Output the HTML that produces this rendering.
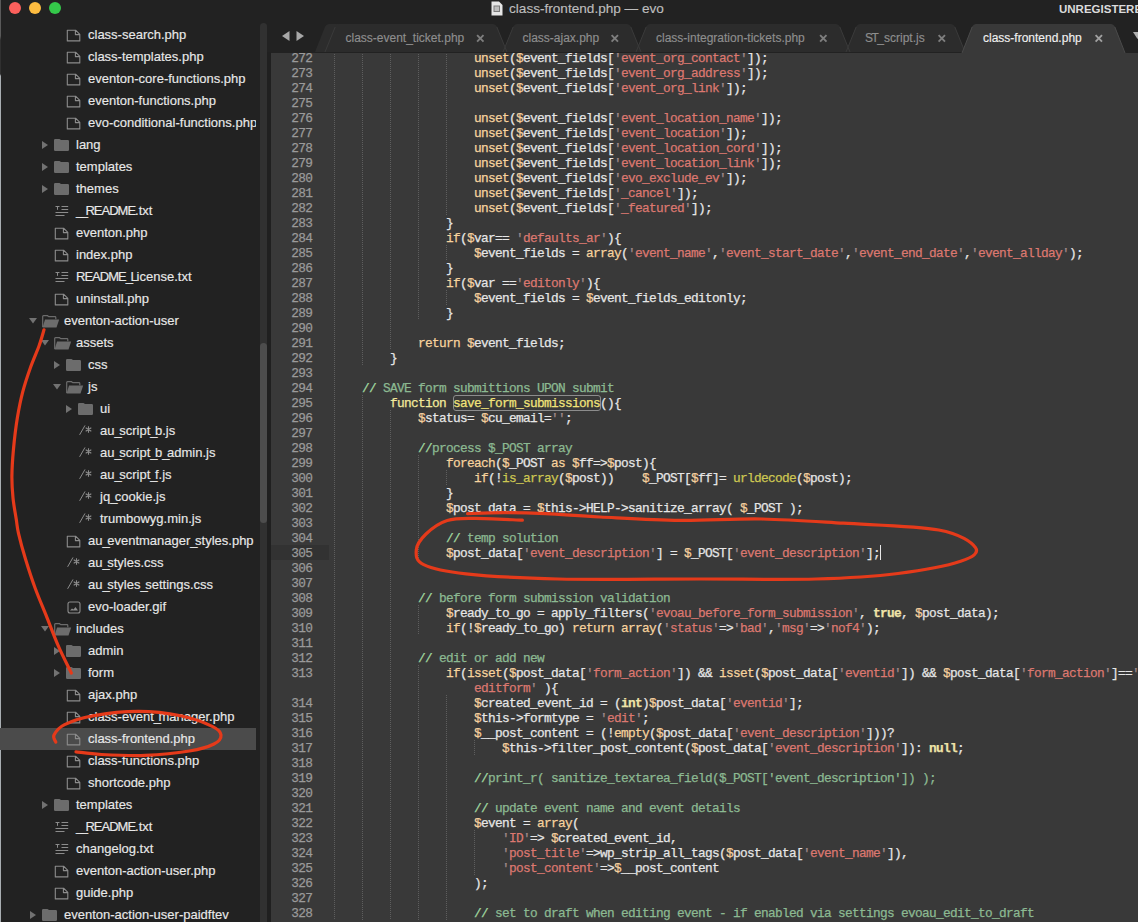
<!DOCTYPE html>
<html><head><meta charset="utf-8"><title>class-frontend.php — evo</title><style>
*{margin:0;padding:0;box-sizing:border-box}
html,body{width:1138px;height:922px;overflow:hidden;background:#222222}
body{position:relative;font-family:"Liberation Sans",sans-serif}
.abs{position:absolute}
#edge{position:absolute;left:0;top:0;width:1px;height:922px;background:linear-gradient(#5a5a5a 0,#5a5a5a 36px,#303030 40px,#303030 74px,#a9aeb2 76px,#a9aeb2 100%)}
.tl{position:absolute;top:2px;width:12px;height:12px;border-radius:50%}
#title{position:absolute;left:509px;top:1px;font-size:13.6px;color:#bdbdbd;line-height:16px;white-space:nowrap}
#unreg{position:absolute;left:1059px;top:2px;font-size:11.5px;font-weight:bold;color:#dcdcdc;line-height:14px;white-space:nowrap}
#tabs{position:absolute;left:0;top:0}
.tt{position:absolute;top:31px;font-size:12px;color:#8e8e8e;line-height:14px;white-space:nowrap}
.tt.act{color:#f0f0f0}
#side{position:absolute;left:0;top:23px;width:256px;height:899px;overflow:hidden}
#sideinner{position:absolute;left:0;top:-23px;width:258px;height:922px}
.sel{position:absolute;left:0;width:256px;height:22px;background:#4b4b4b}
.sbt{position:absolute;font-size:13px;line-height:22px;color:#e8e8e8;white-space:nowrap;padding-top:1px}
.ic{position:absolute}
.sbt b,.tt b{font-weight:normal}.tt b.uc{letter-spacing:-1.5px}.sbt b.us{letter-spacing:-2.5px}.sbt b.uc{letter-spacing:-1px}
.jsic{position:absolute;font-family:"Liberation Sans",sans-serif;font-size:12px;color:#8c8c8c;line-height:14px;letter-spacing:1px}
#track{position:absolute;left:260px;top:23px;width:7px;height:899px;background:#313131;border-radius:3.5px 3.5px 0 0}
#thumb{position:absolute;left:260px;top:343px;width:7px;height:180px;background:#4d4d4d;border-radius:3.5px}
#strip{position:absolute;left:267px;top:52px;width:4px;height:870px;background:#202020}
#ed{position:absolute;left:271px;top:53px;width:867px;height:869px;background:#393939;overflow:hidden}
.ln{position:absolute;left:0;width:41.3px;text-align:right;height:15px;line-height:15px;font-family:"Liberation Mono",monospace;font-size:12.8px;letter-spacing:-0.68px;color:#9a9a9a;padding-top:1px}
.ln.cur{background:transparent}
#curg{position:absolute;left:0;top:492px;width:58px;height:15px;background:#323232}
.cl{position:absolute;height:15px;line-height:15px;white-space:pre;font-family:"Liberation Mono",monospace;font-size:12.8px;letter-spacing:-0.68px;color:#e6e6e6;padding-top:1px}
.cl i{font-style:normal}
.cl,.ln{-webkit-text-stroke:0.25px currentColor}
.sbt,.tt,#title{-webkit-text-stroke:0.15px currentColor}
.gd{position:absolute;width:1px;background:repeating-linear-gradient(#5e5e5e 0,#5e5e5e 1px,transparent 1px,transparent 2px)}
i.k{color:#f7d39e} i.d{color:#f6d09e} i.v{color:#e6e6e6} i.o{color:#e6e6e6} i.s{color:#dc7870} i.q{color:#a08a8a}
i.c{color:#8cb992} i.cs{color:#a2d9a0} i.f{color:#f3ea9c} i.fn{color:#f2e47a} i.b{color:#cdc752} i.t{color:#eee3a8;font-weight:bold}

#boxr{position:absolute;left:182px;top:342px;width:148px;height:16px;border:1px solid #8c8c8c;border-radius:3px}
#cursor{position:absolute;left:609px;top:492px;width:1px;height:15px;background:#e8e8e8}
#ann{position:absolute;left:0;top:0}
</style></head>
<body>
<div id="edge"></div>
<div class="tl" style="left:9px;background:#fc605c"></div>
<div class="tl" style="left:29px;background:#fdbc40"></div>
<div class="tl" style="left:49px;background:#34c84a"></div>
<svg class="abs" style="left:491px;top:1px" width="12" height="15" viewBox="0 0 12 15"><path d="M0.5 0.5 H8 L11.5 4 V14.5 H0.5 Z" fill="#e6e6e6"/><rect x="2.5" y="4.5" width="6.5" height="6.5" fill="#7a7a7a"/><rect x="3.5" y="5.5" width="4.5" height="4.5" fill="#bdbdbd"/></svg>
<div id="title">class-frontend.php — evo</div>
<div id="unreg">UNREGISTERED</div>
<svg id="tabs" width="1138" height="53" viewBox="0 0 1138 53"><path d="M 315 52 L 325 26.8 Q 326.6 24 328.8 24 L 397.2 24 Q 399.4 24 401 26.8 L 420 52 Z" fill="#2c2c2c"/><path d="M 325 52 L 335 26.8 Q 336.6 24 338.8 24 L 493.2 24 Q 495.4 24 497 26.8 L 507 52 Z" fill="#2c2c2c"/><path d="M 503 52 L 513 26.8 Q 514.6 24 516.8 24 L 627.2 24 Q 629.4 24 631 26.8 L 641 52 Z" fill="#2c2c2c"/><path d="M 636 52 L 646 26.8 Q 647.6 24 649.8 24 L 836.2 24 Q 838.4 24 840 26.8 L 850 52 Z" fill="#2c2c2c"/><path d="M 846 52 L 856 26.8 Q 857.6 24 859.8 24 L 951.2 24 Q 953.4 24 955 26.8 L 965 52 Z" fill="#2c2c2c"/><path d="M 325 52 L 335.2 27 M 496.8 27 L 507 52" stroke="#3a3a3a" stroke-width="1" fill="none"/><path d="M 503 52 L 513.2 27 M 630.8 27 L 641 52" stroke="#3a3a3a" stroke-width="1" fill="none"/><path d="M 636 52 L 646.2 27 M 839.8 27 L 850 52" stroke="#3a3a3a" stroke-width="1" fill="none"/><path d="M 846 52 L 856.2 27 M 954.8 27 L 965 52" stroke="#3a3a3a" stroke-width="1" fill="none"/><path d="M 962 53 L 972 26.8 Q 973.6 24 975.8 24 L 1111.2 24 Q 1113.4 24 1115 26.8 L 1125 53 Z" fill="#393939"/><path d="M 962 53 L 972.2 27 M 1114.8 27 L 1125 53" stroke="#4a4a4a" stroke-width="1" fill="none"/><path d="M 282 36 L 289.5 31 L 289.5 41 Z" fill="#a8a8a8"/><path d="M 304 36 L 296.5 31 L 296.5 41 Z" fill="#a8a8a8"/><path d="M 1133 32 L 1142 32 L 1137.5 39 Z" fill="#b0b0b0"/><path d="M 477.1 35.2 L 483.5 41.6 M 483.5 35.2 L 477.1 41.6" stroke="#7e7e7e" stroke-width="1.9"/><path d="M 611.6 35.2 L 618 41.6 M 618 35.2 L 611.6 41.6" stroke="#7e7e7e" stroke-width="1.9"/><path d="M 820.1 35.2 L 826.5 41.6 M 826.5 35.2 L 820.1 41.6" stroke="#7e7e7e" stroke-width="1.9"/><path d="M 938.6 35.2 L 945 41.6 M 945 35.2 L 938.6 41.6" stroke="#7e7e7e" stroke-width="1.9"/><path d="M 1095.6 35.2 L 1102 41.6 M 1102 35.2 L 1095.6 41.6" stroke="#a0a0a0" stroke-width="1.9"/></svg>
<div class="tt" style="left:345.5px">class-event_ticket.php</div><div class="tt" style="left:522.5px">class-ajax.php</div><div class="tt" style="left:656px">class-integration-tickets.php</div><div class="tt" style="left:865px"><b class="uc">S</b><b class="uc">T</b>_script.js</div><div class="tt act" style="left:983px">class-frontend.php</div>
<div id="side"><div id="sideinner"><svg class="ic" style="left:66px;top:28.5px" width="15" height="13" viewBox="0 0 15 13"><path d="M1.3 1.2 H9.6 L13.8 5.4 V11.9 H1.3 Z M9.4 1.2 V5.6 H13.8" fill="none" stroke="#8c8c8c" stroke-width="1.1" stroke-linejoin="round"/></svg><div class="sbt" style="left:88px;top:23px">class-search.php</div><svg class="ic" style="left:66px;top:50.5px" width="15" height="13" viewBox="0 0 15 13"><path d="M1.3 1.2 H9.6 L13.8 5.4 V11.9 H1.3 Z M9.4 1.2 V5.6 H13.8" fill="none" stroke="#8c8c8c" stroke-width="1.1" stroke-linejoin="round"/></svg><div class="sbt" style="left:88px;top:45px">class-templates.php</div><svg class="ic" style="left:66px;top:72.5px" width="15" height="13" viewBox="0 0 15 13"><path d="M1.3 1.2 H9.6 L13.8 5.4 V11.9 H1.3 Z M9.4 1.2 V5.6 H13.8" fill="none" stroke="#8c8c8c" stroke-width="1.1" stroke-linejoin="round"/></svg><div class="sbt" style="left:88px;top:67px">eventon-core-functions.php</div><svg class="ic" style="left:66px;top:94.5px" width="15" height="13" viewBox="0 0 15 13"><path d="M1.3 1.2 H9.6 L13.8 5.4 V11.9 H1.3 Z M9.4 1.2 V5.6 H13.8" fill="none" stroke="#8c8c8c" stroke-width="1.1" stroke-linejoin="round"/></svg><div class="sbt" style="left:88px;top:89px">eventon-functions.php</div><svg class="ic" style="left:66px;top:116.5px" width="15" height="13" viewBox="0 0 15 13"><path d="M1.3 1.2 H9.6 L13.8 5.4 V11.9 H1.3 Z M9.4 1.2 V5.6 H13.8" fill="none" stroke="#8c8c8c" stroke-width="1.1" stroke-linejoin="round"/></svg><div class="sbt" style="left:88px;top:111px">evo-conditional-functions.php</div><svg class="ic" style="left:42px;top:133px" width="8" height="22" viewBox="0 0 8 22"><path d="M0 8 L6 12 L0 16 Z" fill="#727272"/></svg><svg class="ic" style="left:54px;top:138px" width="16" height="13" viewBox="0 0 16 13"><path d="M1.2 1 H5.5 L7 2 H13.8 Q15 2 15 3.2 V11.8 Q15 13 13.8 13 H1.2 Q0 13 0 11.8 V2.2 Q0 1 1.2 1 Z" fill="#6c6c6c"/></svg><div class="sbt" style="left:76px;top:133px">lang</div><svg class="ic" style="left:42px;top:155px" width="8" height="22" viewBox="0 0 8 22"><path d="M0 8 L6 12 L0 16 Z" fill="#727272"/></svg><svg class="ic" style="left:54px;top:160px" width="16" height="13" viewBox="0 0 16 13"><path d="M1.2 1 H5.5 L7 2 H13.8 Q15 2 15 3.2 V11.8 Q15 13 13.8 13 H1.2 Q0 13 0 11.8 V2.2 Q0 1 1.2 1 Z" fill="#6c6c6c"/></svg><div class="sbt" style="left:76px;top:155px">templates</div><svg class="ic" style="left:42px;top:177px" width="8" height="22" viewBox="0 0 8 22"><path d="M0 8 L6 12 L0 16 Z" fill="#727272"/></svg><svg class="ic" style="left:54px;top:182px" width="16" height="13" viewBox="0 0 16 13"><path d="M1.2 1 H5.5 L7 2 H13.8 Q15 2 15 3.2 V11.8 Q15 13 13.8 13 H1.2 Q0 13 0 11.8 V2.2 Q0 1 1.2 1 Z" fill="#6c6c6c"/></svg><div class="sbt" style="left:76px;top:177px">themes</div><svg class="ic" style="left:55px;top:205px" width="14" height="13" viewBox="0 0 14 13"><path d="M0.5 1.5 H4.5 M2.5 1.5 V4.8 M6.5 1.5 H13.2 M6.5 4.5 H13.2 M0.5 7.5 H13.2 M0.5 10.5 H9.5" fill="none" stroke="#8c8c8c" stroke-width="1"/></svg><div class="sbt" style="left:76px;top:199px"><b class="us">_</b><b class="us">_</b><b class="uc">R</b><b class="uc">E</b><b class="uc">A</b><b class="uc">D</b><b class="uc">M</b><b class="uc">E</b>.txt</div><svg class="ic" style="left:54px;top:226.5px" width="15" height="13" viewBox="0 0 15 13"><path d="M1.3 1.2 H9.6 L13.8 5.4 V11.9 H1.3 Z M9.4 1.2 V5.6 H13.8" fill="none" stroke="#8c8c8c" stroke-width="1.1" stroke-linejoin="round"/></svg><div class="sbt" style="left:76px;top:221px">eventon.php</div><svg class="ic" style="left:54px;top:248.5px" width="15" height="13" viewBox="0 0 15 13"><path d="M1.3 1.2 H9.6 L13.8 5.4 V11.9 H1.3 Z M9.4 1.2 V5.6 H13.8" fill="none" stroke="#8c8c8c" stroke-width="1.1" stroke-linejoin="round"/></svg><div class="sbt" style="left:76px;top:243px">index.php</div><svg class="ic" style="left:55px;top:271px" width="14" height="13" viewBox="0 0 14 13"><path d="M0.5 1.5 H4.5 M2.5 1.5 V4.8 M6.5 1.5 H13.2 M6.5 4.5 H13.2 M0.5 7.5 H13.2 M0.5 10.5 H9.5" fill="none" stroke="#8c8c8c" stroke-width="1"/></svg><div class="sbt" style="left:76px;top:265px"><b class="uc">R</b><b class="uc">E</b><b class="uc">A</b><b class="uc">D</b><b class="uc">M</b><b class="uc">E</b><b class="us">_</b><b class="uc">L</b>icense.txt</div><svg class="ic" style="left:54px;top:292.5px" width="15" height="13" viewBox="0 0 15 13"><path d="M1.3 1.2 H9.6 L13.8 5.4 V11.9 H1.3 Z M9.4 1.2 V5.6 H13.8" fill="none" stroke="#8c8c8c" stroke-width="1.1" stroke-linejoin="round"/></svg><div class="sbt" style="left:76px;top:287px">uninstall.php</div><svg class="ic" style="left:29px;top:309px" width="9" height="22" viewBox="0 0 9 22"><path d="M0 9 L8 9 L4 14.5 Z" fill="#727272"/></svg><svg class="ic" style="left:42px;top:314.5px" width="18" height="13" viewBox="0 0 18 13"><path d="M0.7 12 V1.5 Q0.7 0.7 1.5 0.7 H5.5 L6.8 1.7 H13 Q13.8 1.7 13.8 2.5 V4.2" fill="none" stroke="#6c6c6c" stroke-width="1.2"/><path d="M3 4.5 H17.2 L14.5 12.5 H0.5 Z" fill="#6c6c6c"/></svg><div class="sbt" style="left:64px;top:309px">eventon-action-user</div><svg class="ic" style="left:41px;top:331px" width="9" height="22" viewBox="0 0 9 22"><path d="M0 9 L8 9 L4 14.5 Z" fill="#727272"/></svg><svg class="ic" style="left:54px;top:336.5px" width="18" height="13" viewBox="0 0 18 13"><path d="M0.7 12 V1.5 Q0.7 0.7 1.5 0.7 H5.5 L6.8 1.7 H13 Q13.8 1.7 13.8 2.5 V4.2" fill="none" stroke="#6c6c6c" stroke-width="1.2"/><path d="M3 4.5 H17.2 L14.5 12.5 H0.5 Z" fill="#6c6c6c"/></svg><div class="sbt" style="left:76px;top:331px">assets</div><svg class="ic" style="left:54px;top:353px" width="8" height="22" viewBox="0 0 8 22"><path d="M0 8 L6 12 L0 16 Z" fill="#727272"/></svg><svg class="ic" style="left:66px;top:358px" width="16" height="13" viewBox="0 0 16 13"><path d="M1.2 1 H5.5 L7 2 H13.8 Q15 2 15 3.2 V11.8 Q15 13 13.8 13 H1.2 Q0 13 0 11.8 V2.2 Q0 1 1.2 1 Z" fill="#6c6c6c"/></svg><div class="sbt" style="left:88px;top:353px">css</div><svg class="ic" style="left:53px;top:375px" width="9" height="22" viewBox="0 0 9 22"><path d="M0 9 L8 9 L4 14.5 Z" fill="#727272"/></svg><svg class="ic" style="left:66px;top:380.5px" width="18" height="13" viewBox="0 0 18 13"><path d="M0.7 12 V1.5 Q0.7 0.7 1.5 0.7 H5.5 L6.8 1.7 H13 Q13.8 1.7 13.8 2.5 V4.2" fill="none" stroke="#6c6c6c" stroke-width="1.2"/><path d="M3 4.5 H17.2 L14.5 12.5 H0.5 Z" fill="#6c6c6c"/></svg><div class="sbt" style="left:88px;top:375px">js</div><svg class="ic" style="left:66px;top:397px" width="8" height="22" viewBox="0 0 8 22"><path d="M0 8 L6 12 L0 16 Z" fill="#727272"/></svg><svg class="ic" style="left:78px;top:402px" width="16" height="13" viewBox="0 0 16 13"><path d="M1.2 1 H5.5 L7 2 H13.8 Q15 2 15 3.2 V11.8 Q15 13 13.8 13 H1.2 Q0 13 0 11.8 V2.2 Q0 1 1.2 1 Z" fill="#6c6c6c"/></svg><div class="sbt" style="left:100px;top:397px">ui</div><svg class="ic" style="left:79px;top:425px" width="13" height="11" viewBox="0 0 13 11"><path d="M0.8 9.5 L5.8 0.8" stroke="#8c8c8c" stroke-width="1" stroke-linecap="round"/><path d="M9.5 1.2 V7.8 M6.7 2.8 L12.3 6.2 M6.7 6.2 L12.3 2.8" stroke="#8c8c8c" stroke-width="1.1"/></svg><div class="sbt" style="left:100px;top:419px">au<b class="us">_</b>script<b class="us">_</b>b.js</div><svg class="ic" style="left:79px;top:447px" width="13" height="11" viewBox="0 0 13 11"><path d="M0.8 9.5 L5.8 0.8" stroke="#8c8c8c" stroke-width="1" stroke-linecap="round"/><path d="M9.5 1.2 V7.8 M6.7 2.8 L12.3 6.2 M6.7 6.2 L12.3 2.8" stroke="#8c8c8c" stroke-width="1.1"/></svg><div class="sbt" style="left:100px;top:441px">au<b class="us">_</b>script<b class="us">_</b>b<b class="us">_</b>admin.js</div><svg class="ic" style="left:79px;top:469px" width="13" height="11" viewBox="0 0 13 11"><path d="M0.8 9.5 L5.8 0.8" stroke="#8c8c8c" stroke-width="1" stroke-linecap="round"/><path d="M9.5 1.2 V7.8 M6.7 2.8 L12.3 6.2 M6.7 6.2 L12.3 2.8" stroke="#8c8c8c" stroke-width="1.1"/></svg><div class="sbt" style="left:100px;top:463px">au<b class="us">_</b>script<b class="us">_</b>f.js</div><svg class="ic" style="left:79px;top:491px" width="13" height="11" viewBox="0 0 13 11"><path d="M0.8 9.5 L5.8 0.8" stroke="#8c8c8c" stroke-width="1" stroke-linecap="round"/><path d="M9.5 1.2 V7.8 M6.7 2.8 L12.3 6.2 M6.7 6.2 L12.3 2.8" stroke="#8c8c8c" stroke-width="1.1"/></svg><div class="sbt" style="left:100px;top:485px">jq<b class="us">_</b>cookie.js</div><svg class="ic" style="left:79px;top:513px" width="13" height="11" viewBox="0 0 13 11"><path d="M0.8 9.5 L5.8 0.8" stroke="#8c8c8c" stroke-width="1" stroke-linecap="round"/><path d="M9.5 1.2 V7.8 M6.7 2.8 L12.3 6.2 M6.7 6.2 L12.3 2.8" stroke="#8c8c8c" stroke-width="1.1"/></svg><div class="sbt" style="left:100px;top:507px">trumbowyg.min.js</div><svg class="ic" style="left:66px;top:534.5px" width="15" height="13" viewBox="0 0 15 13"><path d="M1.3 1.2 H9.6 L13.8 5.4 V11.9 H1.3 Z M9.4 1.2 V5.6 H13.8" fill="none" stroke="#8c8c8c" stroke-width="1.1" stroke-linejoin="round"/></svg><div class="sbt" style="left:88px;top:529px">au<b class="us">_</b>eventmanager<b class="us">_</b>styles.php</div><svg class="ic" style="left:67px;top:557px" width="13" height="11" viewBox="0 0 13 11"><path d="M0.8 9.5 L5.8 0.8" stroke="#8c8c8c" stroke-width="1" stroke-linecap="round"/><path d="M9.5 1.2 V7.8 M6.7 2.8 L12.3 6.2 M6.7 6.2 L12.3 2.8" stroke="#8c8c8c" stroke-width="1.1"/></svg><div class="sbt" style="left:88px;top:551px">au<b class="us">_</b>styles.css</div><svg class="ic" style="left:67px;top:579px" width="13" height="11" viewBox="0 0 13 11"><path d="M0.8 9.5 L5.8 0.8" stroke="#8c8c8c" stroke-width="1" stroke-linecap="round"/><path d="M9.5 1.2 V7.8 M6.7 2.8 L12.3 6.2 M6.7 6.2 L12.3 2.8" stroke="#8c8c8c" stroke-width="1.1"/></svg><div class="sbt" style="left:88px;top:573px">au<b class="us">_</b>styles<b class="us">_</b>settings.css</div><svg class="ic" style="left:67px;top:601px" width="14" height="13" viewBox="0 0 14 13"><rect x="1" y="1" width="12" height="11" rx="2" fill="none" stroke="#8c8c8c" stroke-width="1.1"/><path d="M3 9.5 L5 7.5 L6.5 8.5 L8.5 6 L11 9.5 Z" fill="#8c8c8c"/></svg><div class="sbt" style="left:88px;top:595px">evo-loader.gif</div><svg class="ic" style="left:41px;top:617px" width="9" height="22" viewBox="0 0 9 22"><path d="M0 9 L8 9 L4 14.5 Z" fill="#727272"/></svg><svg class="ic" style="left:54px;top:622.5px" width="18" height="13" viewBox="0 0 18 13"><path d="M0.7 12 V1.5 Q0.7 0.7 1.5 0.7 H5.5 L6.8 1.7 H13 Q13.8 1.7 13.8 2.5 V4.2" fill="none" stroke="#6c6c6c" stroke-width="1.2"/><path d="M3 4.5 H17.2 L14.5 12.5 H0.5 Z" fill="#6c6c6c"/></svg><div class="sbt" style="left:76px;top:617px">includes</div><svg class="ic" style="left:54px;top:639px" width="8" height="22" viewBox="0 0 8 22"><path d="M0 8 L6 12 L0 16 Z" fill="#727272"/></svg><svg class="ic" style="left:66px;top:644px" width="16" height="13" viewBox="0 0 16 13"><path d="M1.2 1 H5.5 L7 2 H13.8 Q15 2 15 3.2 V11.8 Q15 13 13.8 13 H1.2 Q0 13 0 11.8 V2.2 Q0 1 1.2 1 Z" fill="#6c6c6c"/></svg><div class="sbt" style="left:88px;top:639px">admin</div><svg class="ic" style="left:54px;top:661px" width="8" height="22" viewBox="0 0 8 22"><path d="M0 8 L6 12 L0 16 Z" fill="#727272"/></svg><svg class="ic" style="left:66px;top:666px" width="16" height="13" viewBox="0 0 16 13"><path d="M1.2 1 H5.5 L7 2 H13.8 Q15 2 15 3.2 V11.8 Q15 13 13.8 13 H1.2 Q0 13 0 11.8 V2.2 Q0 1 1.2 1 Z" fill="#6c6c6c"/></svg><div class="sbt" style="left:88px;top:661px">form</div><svg class="ic" style="left:66px;top:688.5px" width="15" height="13" viewBox="0 0 15 13"><path d="M1.3 1.2 H9.6 L13.8 5.4 V11.9 H1.3 Z M9.4 1.2 V5.6 H13.8" fill="none" stroke="#8c8c8c" stroke-width="1.1" stroke-linejoin="round"/></svg><div class="sbt" style="left:88px;top:683px">ajax.php</div><svg class="ic" style="left:66px;top:710.5px" width="15" height="13" viewBox="0 0 15 13"><path d="M1.3 1.2 H9.6 L13.8 5.4 V11.9 H1.3 Z M9.4 1.2 V5.6 H13.8" fill="none" stroke="#8c8c8c" stroke-width="1.1" stroke-linejoin="round"/></svg><div class="sbt" style="left:88px;top:705px">class-event<b class="us">_</b>manager.php</div><div class="sel" style="top:728px"></div><svg class="ic" style="left:66px;top:732.5px" width="15" height="13" viewBox="0 0 15 13"><path d="M1.3 1.2 H9.6 L13.8 5.4 V11.9 H1.3 Z M9.4 1.2 V5.6 H13.8" fill="none" stroke="#8c8c8c" stroke-width="1.1" stroke-linejoin="round"/></svg><div class="sbt" style="left:88px;top:727px">class-frontend.php</div><svg class="ic" style="left:66px;top:754.5px" width="15" height="13" viewBox="0 0 15 13"><path d="M1.3 1.2 H9.6 L13.8 5.4 V11.9 H1.3 Z M9.4 1.2 V5.6 H13.8" fill="none" stroke="#8c8c8c" stroke-width="1.1" stroke-linejoin="round"/></svg><div class="sbt" style="left:88px;top:749px">class-functions.php</div><svg class="ic" style="left:66px;top:776.5px" width="15" height="13" viewBox="0 0 15 13"><path d="M1.3 1.2 H9.6 L13.8 5.4 V11.9 H1.3 Z M9.4 1.2 V5.6 H13.8" fill="none" stroke="#8c8c8c" stroke-width="1.1" stroke-linejoin="round"/></svg><div class="sbt" style="left:88px;top:771px">shortcode.php</div><svg class="ic" style="left:42px;top:793px" width="8" height="22" viewBox="0 0 8 22"><path d="M0 8 L6 12 L0 16 Z" fill="#727272"/></svg><svg class="ic" style="left:54px;top:798px" width="16" height="13" viewBox="0 0 16 13"><path d="M1.2 1 H5.5 L7 2 H13.8 Q15 2 15 3.2 V11.8 Q15 13 13.8 13 H1.2 Q0 13 0 11.8 V2.2 Q0 1 1.2 1 Z" fill="#6c6c6c"/></svg><div class="sbt" style="left:76px;top:793px">templates</div><svg class="ic" style="left:55px;top:821px" width="14" height="13" viewBox="0 0 14 13"><path d="M0.5 1.5 H4.5 M2.5 1.5 V4.8 M6.5 1.5 H13.2 M6.5 4.5 H13.2 M0.5 7.5 H13.2 M0.5 10.5 H9.5" fill="none" stroke="#8c8c8c" stroke-width="1"/></svg><div class="sbt" style="left:76px;top:815px"><b class="us">_</b><b class="us">_</b><b class="uc">R</b><b class="uc">E</b><b class="uc">A</b><b class="uc">D</b><b class="uc">M</b><b class="uc">E</b>.txt</div><svg class="ic" style="left:55px;top:843px" width="14" height="13" viewBox="0 0 14 13"><path d="M0.5 1.5 H4.5 M2.5 1.5 V4.8 M6.5 1.5 H13.2 M6.5 4.5 H13.2 M0.5 7.5 H13.2 M0.5 10.5 H9.5" fill="none" stroke="#8c8c8c" stroke-width="1"/></svg><div class="sbt" style="left:76px;top:837px">changelog.txt</div><svg class="ic" style="left:54px;top:864.5px" width="15" height="13" viewBox="0 0 15 13"><path d="M1.3 1.2 H9.6 L13.8 5.4 V11.9 H1.3 Z M9.4 1.2 V5.6 H13.8" fill="none" stroke="#8c8c8c" stroke-width="1.1" stroke-linejoin="round"/></svg><div class="sbt" style="left:76px;top:859px">eventon-action-user.php</div><svg class="ic" style="left:54px;top:886.5px" width="15" height="13" viewBox="0 0 15 13"><path d="M1.3 1.2 H9.6 L13.8 5.4 V11.9 H1.3 Z M9.4 1.2 V5.6 H13.8" fill="none" stroke="#8c8c8c" stroke-width="1.1" stroke-linejoin="round"/></svg><div class="sbt" style="left:76px;top:881px">guide.php</div><svg class="ic" style="left:30px;top:903px" width="8" height="22" viewBox="0 0 8 22"><path d="M0 8 L6 12 L0 16 Z" fill="#727272"/></svg><svg class="ic" style="left:42px;top:908px" width="16" height="13" viewBox="0 0 16 13"><path d="M1.2 1 H5.5 L7 2 H13.8 Q15 2 15 3.2 V11.8 Q15 13 13.8 13 H1.2 Q0 13 0 11.8 V2.2 Q0 1 1.2 1 Z" fill="#6c6c6c"/></svg><div class="sbt" style="left:64px;top:903px">eventon-action-user-paidftev</div></div></div>
<div id="track"></div><div id="thumb"></div>
<div id="strip"></div>
<div id="ed">
<div id="curg"></div>
<div class="gd" style="left:63px;top:-3px;height:870px"></div><div class="gd" style="left:91px;top:-3px;height:315px"></div><div class="gd" style="left:91px;top:342px;height:525px"></div><div class="gd" style="left:119px;top:-3px;height:300px"></div><div class="gd" style="left:119px;top:357px;height:510px"></div><div class="gd" style="left:147px;top:-3px;height:270px"></div><div class="gd" style="left:147px;top:402px;height:105px"></div><div class="gd" style="left:147px;top:552px;height:30px"></div><div class="gd" style="left:147px;top:612px;height:255px"></div><div class="gd" style="left:175px;top:-3px;height:165px"></div><div class="gd" style="left:175px;top:192px;height:15px"></div><div class="gd" style="left:175px;top:237px;height:15px"></div><div class="gd" style="left:175px;top:417px;height:15px"></div><div class="gd" style="left:175px;top:642px;height:225px"></div><div class="gd" style="left:203px;top:687px;height:15px"></div><div class="gd" style="left:203px;top:777px;height:45px"></div>
<div class="ln" style="top:-3px">272</div><div class="ln" style="top:12px">273</div><div class="ln" style="top:27px">274</div><div class="ln" style="top:42px">275</div><div class="ln" style="top:57px">276</div><div class="ln" style="top:72px">277</div><div class="ln" style="top:87px">278</div><div class="ln" style="top:102px">279</div><div class="ln" style="top:117px">280</div><div class="ln" style="top:132px">281</div><div class="ln" style="top:147px">282</div><div class="ln" style="top:162px">283</div><div class="ln" style="top:177px">284</div><div class="ln" style="top:192px">285</div><div class="ln" style="top:207px">286</div><div class="ln" style="top:222px">287</div><div class="ln" style="top:237px">288</div><div class="ln" style="top:252px">289</div><div class="ln" style="top:267px">290</div><div class="ln" style="top:282px">291</div><div class="ln" style="top:297px">292</div><div class="ln" style="top:312px">293</div><div class="ln" style="top:327px">294</div><div class="ln" style="top:342px">295</div><div class="ln" style="top:357px">296</div><div class="ln" style="top:372px">297</div><div class="ln" style="top:387px">298</div><div class="ln" style="top:402px">299</div><div class="ln" style="top:417px">300</div><div class="ln" style="top:432px">301</div><div class="ln" style="top:447px">302</div><div class="ln" style="top:462px">303</div><div class="ln" style="top:477px">304</div><div class="ln cur" style="top:492px">305</div><div class="ln" style="top:507px">306</div><div class="ln" style="top:522px">307</div><div class="ln" style="top:537px">308</div><div class="ln" style="top:552px">309</div><div class="ln" style="top:567px">310</div><div class="ln" style="top:582px">311</div><div class="ln" style="top:597px">312</div><div class="ln" style="top:612px">313</div><div class="ln" style="top:642px">314</div><div class="ln" style="top:657px">315</div><div class="ln" style="top:672px">316</div><div class="ln" style="top:687px">317</div><div class="ln" style="top:702px">318</div><div class="ln" style="top:717px">319</div><div class="ln" style="top:732px">320</div><div class="ln" style="top:747px">321</div><div class="ln" style="top:762px">322</div><div class="ln" style="top:777px">323</div><div class="ln" style="top:792px">324</div><div class="ln" style="top:807px">325</div><div class="ln" style="top:822px">326</div><div class="ln" style="top:837px">327</div><div class="ln" style="top:852px">328</div>
<div id="boxr"></div>
<div class="cl" style="top:-3px;left:203px"><i class="k">unset</i><i class="o">(</i><i class="d">$</i><i class="v">event_fields</i><i class="o">[</i><i class="q">'</i><i class="s">event_org_contact</i><i class="q">'</i><i class="o">]);</i></div><div class="cl" style="top:12px;left:203px"><i class="k">unset</i><i class="o">(</i><i class="d">$</i><i class="v">event_fields</i><i class="o">[</i><i class="q">'</i><i class="s">event_org_address</i><i class="q">'</i><i class="o">]);</i></div><div class="cl" style="top:27px;left:203px"><i class="k">unset</i><i class="o">(</i><i class="d">$</i><i class="v">event_fields</i><i class="o">[</i><i class="q">'</i><i class="s">event_org_link</i><i class="q">'</i><i class="o">]);</i></div><div class="cl" style="top:57px;left:203px"><i class="k">unset</i><i class="o">(</i><i class="d">$</i><i class="v">event_fields</i><i class="o">[</i><i class="q">'</i><i class="s">event_location_name</i><i class="q">'</i><i class="o">]);</i></div><div class="cl" style="top:72px;left:203px"><i class="k">unset</i><i class="o">(</i><i class="d">$</i><i class="v">event_fields</i><i class="o">[</i><i class="q">'</i><i class="s">event_location</i><i class="q">'</i><i class="o">]);</i></div><div class="cl" style="top:87px;left:203px"><i class="k">unset</i><i class="o">(</i><i class="d">$</i><i class="v">event_fields</i><i class="o">[</i><i class="q">'</i><i class="s">event_location_cord</i><i class="q">'</i><i class="o">]);</i></div><div class="cl" style="top:102px;left:203px"><i class="k">unset</i><i class="o">(</i><i class="d">$</i><i class="v">event_fields</i><i class="o">[</i><i class="q">'</i><i class="s">event_location_link</i><i class="q">'</i><i class="o">]);</i></div><div class="cl" style="top:117px;left:203px"><i class="k">unset</i><i class="o">(</i><i class="d">$</i><i class="v">event_fields</i><i class="o">[</i><i class="q">'</i><i class="s">evo_exclude_ev</i><i class="q">'</i><i class="o">]);</i></div><div class="cl" style="top:132px;left:203px"><i class="k">unset</i><i class="o">(</i><i class="d">$</i><i class="v">event_fields</i><i class="o">[</i><i class="q">'</i><i class="s">_cancel</i><i class="q">'</i><i class="o">]);</i></div><div class="cl" style="top:147px;left:203px"><i class="k">unset</i><i class="o">(</i><i class="d">$</i><i class="v">event_fields</i><i class="o">[</i><i class="q">'</i><i class="s">_featured</i><i class="q">'</i><i class="o">]);</i></div><div class="cl" style="top:162px;left:175px"><i class="o">}</i></div><div class="cl" style="top:177px;left:175px"><i class="k">if</i><i class="o">(</i><i class="d">$</i><i class="v">var</i><i class="o">== </i><i class="q">'</i><i class="s">defaults_ar</i><i class="q">'</i><i class="o">){</i></div><div class="cl" style="top:192px;left:203px"><i class="d">$</i><i class="v">event_fields</i><i class="o"> = </i><i class="k">array</i><i class="o">(</i><i class="q">'</i><i class="s">event_name</i><i class="q">'</i><i class="o">,</i><i class="q">'</i><i class="s">event_start_date</i><i class="q">'</i><i class="o">,</i><i class="q">'</i><i class="s">event_end_date</i><i class="q">'</i><i class="o">,</i><i class="q">'</i><i class="s">event_allday</i><i class="q">'</i><i class="o">);</i></div><div class="cl" style="top:207px;left:175px"><i class="o">}</i></div><div class="cl" style="top:222px;left:175px"><i class="k">if</i><i class="o">(</i><i class="d">$</i><i class="v">var</i><i class="o"> ==</i><i class="q">'</i><i class="s">editonly</i><i class="q">'</i><i class="o">){</i></div><div class="cl" style="top:237px;left:203px"><i class="d">$</i><i class="v">event_fields</i><i class="o"> = </i><i class="d">$</i><i class="v">event_fields_editonly</i><i class="o">;</i></div><div class="cl" style="top:252px;left:175px"><i class="o">}</i></div><div class="cl" style="top:282px;left:147px"><i class="k">return</i><i class="o"> </i><i class="d">$</i><i class="v">event_fields</i><i class="o">;</i></div><div class="cl" style="top:297px;left:119px"><i class="o">}</i></div><div class="cl" style="top:327px;left:91px"><i class="cs">//</i><i class="c"> SAVE form submittions UPON submit</i></div><div class="cl" style="top:342px;left:119px"><i class="f">function</i><i class="o"> </i><i class="fn box">save_form_submissions</i><i class="o">(){</i></div><div class="cl" style="top:357px;left:147px"><i class="d">$</i><i class="v">status</i><i class="o">= </i><i class="d">$</i><i class="v">cu_email</i><i class="o">=</i><i class="q">'</i><i class="s"></i><i class="q">'</i><i class="o">;</i></div><div class="cl" style="top:387px;left:147px"><i class="cs">//</i><i class="c">process $_POST array</i></div><div class="cl" style="top:402px;left:175px"><i class="k">foreach</i><i class="o">(</i><i class="d">$</i><i class="v">_POST</i><i class="o"> </i><i class="k">as</i><i class="o"> </i><i class="d">$</i><i class="v">ff</i><i class="o">=&gt;</i><i class="d">$</i><i class="v">post</i><i class="o">){</i></div><div class="cl" style="top:417px;left:203px"><i class="k">if</i><i class="o">(!</i><i class="b">is_array</i><i class="o">(</i><i class="d">$</i><i class="v">post</i><i class="o">))    </i><i class="d">$</i><i class="v">_POST</i><i class="o">[</i><i class="d">$</i><i class="v">ff</i><i class="o">]= </i><i class="b">urldecode</i><i class="o">(</i><i class="d">$</i><i class="v">post</i><i class="o">);</i></div><div class="cl" style="top:432px;left:175px"><i class="o">}</i></div><div class="cl" style="top:447px;left:175px"><i class="d">$</i><i class="v">post_data</i><i class="o"> = </i><i class="d">$</i><i class="v">this</i><i class="o">-&gt;</i><i class="o">HELP</i><i class="o">-&gt;</i><i class="o">sanitize_array</i><i class="o">( </i><i class="d">$</i><i class="v">_POST</i><i class="o"> );</i></div><div class="cl" style="top:477px;left:175px"><i class="cs">//</i><i class="c"> temp solution</i></div><div class="cl" style="top:492px;left:175px"><i class="d">$</i><i class="v">post_data</i><i class="o">[</i><i class="q">'</i><i class="s">event_description</i><i class="q">'</i><i class="o">] = </i><i class="d">$</i><i class="v">_POST</i><i class="o">[</i><i class="q">'</i><i class="s">event_description</i><i class="q">'</i><i class="o">];</i></div><div class="cl" style="top:537px;left:147px"><i class="cs">//</i><i class="c"> before form submission validation</i></div><div class="cl" style="top:552px;left:175px"><i class="d">$</i><i class="v">ready_to_go</i><i class="o"> = </i><i class="o">apply_filters</i><i class="o">(</i><i class="q">'</i><i class="s">evoau_before_form_submission</i><i class="q">'</i><i class="o">, </i><i class="t">true</i><i class="o">, </i><i class="d">$</i><i class="v">post_data</i><i class="o">);</i></div><div class="cl" style="top:567px;left:175px"><i class="k">if</i><i class="o">(!</i><i class="d">$</i><i class="v">ready_to_go</i><i class="o">) </i><i class="k">return</i><i class="o"> </i><i class="k">array</i><i class="o">(</i><i class="q">'</i><i class="s">status</i><i class="q">'</i><i class="o">=&gt;</i><i class="q">'</i><i class="s">bad</i><i class="q">'</i><i class="o">,</i><i class="q">'</i><i class="s">msg</i><i class="q">'</i><i class="o">=&gt;</i><i class="q">'</i><i class="s">nof4</i><i class="q">'</i><i class="o">);</i></div><div class="cl" style="top:597px;left:147px"><i class="cs">//</i><i class="c"> edit or add new</i></div><div class="cl" style="top:612px;left:175px"><i class="k">if</i><i class="o">(</i><i class="k">isset</i><i class="o">(</i><i class="d">$</i><i class="v">post_data</i><i class="o">[</i><i class="q">'</i><i class="s">form_action</i><i class="q">'</i><i class="o">]) &amp;&amp; </i><i class="k">isset</i><i class="o">(</i><i class="d">$</i><i class="v">post_data</i><i class="o">[</i><i class="q">'</i><i class="s">eventid</i><i class="q">'</i><i class="o">]) &amp;&amp; </i><i class="d">$</i><i class="v">post_data</i><i class="o">[</i><i class="q">'</i><i class="s">form_action</i><i class="q">'</i><i class="o">]==</i><i class="q">'</i></div><div class="cl" style="top:627px;left:203px"><i class="s">editform</i><i class="q">'</i><i class="o"> ){</i></div><div class="cl" style="top:642px;left:203px"><i class="d">$</i><i class="v">created_event_id</i><i class="o"> = (</i><i class="t">int</i><i class="o">)</i><i class="d">$</i><i class="v">post_data</i><i class="o">[</i><i class="q">'</i><i class="s">eventid</i><i class="q">'</i><i class="o">];</i></div><div class="cl" style="top:657px;left:203px"><i class="d">$</i><i class="v">this</i><i class="o">-&gt;</i><i class="o">formtype</i><i class="o"> = </i><i class="q">'</i><i class="s">edit</i><i class="q">'</i><i class="o">;</i></div><div class="cl" style="top:672px;left:203px"><i class="d">$</i><i class="v">__post_content</i><i class="o"> = (!</i><i class="k">empty</i><i class="o">(</i><i class="d">$</i><i class="v">post_data</i><i class="o">[</i><i class="q">'</i><i class="s">event_description</i><i class="q">'</i><i class="o">]))?</i></div><div class="cl" style="top:687px;left:231px"><i class="d">$</i><i class="v">this</i><i class="o">-&gt;</i><i class="o">filter_post_content</i><i class="o">(</i><i class="d">$</i><i class="v">post_data</i><i class="o">[</i><i class="q">'</i><i class="s">event_description</i><i class="q">'</i><i class="o">]): </i><i class="t">null</i><i class="o">;</i></div><div class="cl" style="top:717px;left:203px"><i class="cs">//</i><i class="c">print_r( sanitize_textarea_field($_POST['event_description']) );</i></div><div class="cl" style="top:747px;left:203px"><i class="cs">//</i><i class="c"> update event name and event details</i></div><div class="cl" style="top:762px;left:203px"><i class="d">$</i><i class="v">event</i><i class="o"> = </i><i class="k">array</i><i class="o">(</i></div><div class="cl" style="top:777px;left:231px"><i class="q">'</i><i class="s">ID</i><i class="q">'</i><i class="o">=&gt; </i><i class="d">$</i><i class="v">created_event_id</i><i class="o">,</i></div><div class="cl" style="top:792px;left:231px"><i class="q">'</i><i class="s">post_title</i><i class="q">'</i><i class="o">=&gt;</i><i class="o">wp_strip_all_tags</i><i class="o">(</i><i class="d">$</i><i class="v">post_data</i><i class="o">[</i><i class="q">'</i><i class="s">event_name</i><i class="q">'</i><i class="o">]),</i></div><div class="cl" style="top:807px;left:231px"><i class="q">'</i><i class="s">post_content</i><i class="q">'</i><i class="o">=&gt;</i><i class="d">$</i><i class="v">__post_content</i></div><div class="cl" style="top:822px;left:203px"><i class="o">);</i></div><div class="cl" style="top:852px;left:203px"><i class="cs">//</i><i class="c"> set to draft when editing event - if enabled via settings evoau_edit_to_draft</i></div>
<div id="cursor"></div>
</div>
<svg id="ann" width="1138" height="922" viewBox="0 0 1138 922"><path d="M 44.0 329.8 C 43.2 332.5 41.3 339.7 39.0 346.0 C 36.7 352.3 33.1 360.1 30.4 367.7 C 27.7 375.3 25.0 383.3 22.8 391.6 C 20.6 399.9 19.0 407.9 17.4 417.6 C 15.8 427.3 14.3 440.3 13.4 450.0 C 12.5 459.7 12.0 468.0 11.9 476.0 C 11.8 484.0 12.3 490.6 13.0 497.9 C 13.7 505.2 15.4 513.7 16.3 519.6 C 17.2 525.5 17.0 526.9 18.5 533.4 C 20.0 539.9 22.6 549.7 25.4 558.8 C 28.2 567.9 31.5 578.2 35.1 588.0 C 38.7 597.8 43.0 607.6 46.9 617.4 C 50.8 627.2 54.5 637.4 58.6 646.7 C 62.7 656.0 69.2 668.6 71.3 673.0" fill="none" stroke="#e53a1a" stroke-width="3.2" stroke-linecap="round" stroke-linejoin="round"/><path d="M 55.8 742.2 C 55.5 741.0 52.5 737.9 54.0 735.0 C 55.5 732.1 58.1 727.8 64.6 724.6 C 71.0 721.4 80.4 718.0 92.7 715.8 C 105.0 713.6 123.8 711.4 138.4 711.4 C 153.1 711.4 168.3 713.3 180.6 715.8 C 192.9 718.3 205.5 723.2 212.2 726.4 C 218.9 729.6 220.7 732.1 221.0 735.0 C 221.3 737.9 219.3 741.3 214.0 744.0 C 208.7 746.7 200.8 749.1 189.4 751.0 C 178.0 752.9 160.1 754.8 145.4 755.4 C 130.8 756.0 113.1 755.1 101.5 754.5 C 89.9 753.9 80.2 752.2 76.0 751.8" fill="none" stroke="#e53a1a" stroke-width="3.2" stroke-linecap="round" stroke-linejoin="round"/><path d="M 467.6 513.7 C 473.6 513.5 490.5 512.7 503.5 512.7 C 516.5 512.7 529.5 513.0 545.6 513.7 C 561.7 514.4 577.6 515.9 600.0 517.0 C 622.4 518.1 653.0 520.1 680.0 520.4 C 707.0 520.7 734.5 518.5 761.7 519.0 C 788.9 519.5 813.9 521.4 843.4 523.2 C 872.9 525.0 916.8 525.9 938.8 530.0 C 960.8 534.1 971.9 542.5 975.5 547.7 C 979.1 552.9 973.5 557.0 960.6 561.3 C 947.7 565.6 922.1 570.5 898.0 573.5 C 873.9 576.5 849.2 578.1 816.2 579.0 C 783.2 579.9 743.0 579.0 700.0 579.0 C 657.0 579.0 597.0 579.9 558.0 579.0 C 519.0 578.1 488.4 576.2 466.0 573.8 C 443.6 571.4 432.0 568.6 423.7 564.6 C 415.4 560.6 415.9 555.1 416.3 550.0 C 416.7 544.9 420.9 538.9 426.0 534.0 C 431.1 529.1 439.0 523.1 447.2 520.5 C 455.4 517.9 462.8 518.4 475.3 518.4 C 487.8 518.4 514.5 519.9 522.4 520.2" fill="none" stroke="#e53a1a" stroke-width="3.2" stroke-linecap="round" stroke-linejoin="round"/></svg>
</body></html>
